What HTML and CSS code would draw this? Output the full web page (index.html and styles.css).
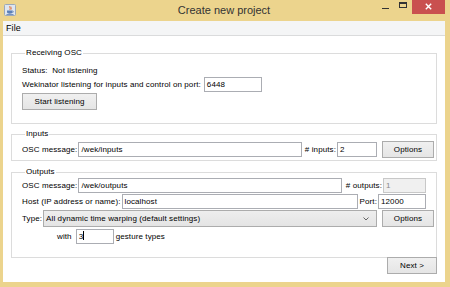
FILE: index.html
```html
<!DOCTYPE html>
<html>
<head>
<meta charset="utf-8">
<link rel="stylesheet" href="styles.css">
</head>
<body>
<div class="window">
  <div class="titlebar">
    <div class="tb-left">
      <svg class="appicon" width="12" height="12" viewBox="0 0 12 12">
        <rect x="0.5" y="0.5" width="11" height="11" rx="1" fill="#dfe6ef" stroke="#9aa8ba"/>
        <path d="M6 2 C5 3.5 7 4 5.8 5.8 M7.2 2.8 C6.6 4 7.8 4.3 7 5.6" stroke="#e0662a" stroke-width="0.9" fill="none"/>
        <path d="M3 6.5 H8.5 V8 C8.5 9.2 7.5 9.7 5.8 9.7 C4 9.7 3 9.2 3 8 Z" fill="#5b7fb8"/>
        <path d="M8.5 7 C9.8 7 9.8 8.5 8.4 8.6" stroke="#5b7fb8" stroke-width="0.7" fill="none"/>
        <rect x="2.5" y="10" width="7" height="0.8" fill="#5b7fb8"/>
      </svg>
    </div>
    <div class="title">Create new project</div>
    <div class="tb-right">
      <div class="ctl ctl-min"><span class="min-glyph"></span></div>
      <div class="ctl ctl-max"><span class="max-glyph"></span></div>
      <div class="ctl ctl-close">
        <svg width="7" height="7" viewBox="0 0 7 7"><path d="M0.8 0.8 L6.2 6.2 M6.2 0.8 L0.8 6.2" stroke="#fff" stroke-width="1.4"/></svg>
      </div>
    </div>
  </div>
  <div class="client">
    <div class="menubar"><span class="menu-item">File</span></div>
    <div class="content">
      <fieldset class="group group-receive">
        <legend>Receiving OSC</legend>
        <div class="line status">Status:&nbsp; Not listening</div>
        <div class="row row-port">
          <span class="label">Wekinator listening for inputs and control on port:</span>
          <span class="field field-port">6448</span>
        </div>
        <div class="row">
          <span class="btn btn-start">Start listening</span>
        </div>
      </fieldset>

      <fieldset class="group group-inputs">
        <legend>Inputs</legend>
        <div class="row row-inputs">
          <span class="label">OSC message:</span>
          <span class="field grow">/wek/inputs</span>
          <span class="label lbl-num">#&nbsp;inputs:</span>
          <span class="field field-num">2</span>
          <span class="btn btn-options">Options</span>
        </div>
      </fieldset>

      <fieldset class="group group-outputs">
        <legend>Outputs</legend>
        <div class="row row-o1">
          <span class="label">OSC message:</span>
          <span class="field grow">/wek/outputs</span>
          <span class="label lbl-outs">#&nbsp;outputs:</span>
          <span class="field field-disabled">1</span>
        </div>
        <div class="row row-o2">
          <span class="label">Host (IP address or name):</span>
          <span class="field grow">localhost</span>
          <span class="label lbl-port">Port:</span>
          <span class="field field-port2">12000</span>
        </div>
        <div class="row row-o3">
          <span class="label">Type:</span>
          <span class="combo grow">
            <span class="combo-text">All dynamic time warping (default settings)</span>
            <svg class="chev" width="6" height="4" viewBox="0 0 6 4"><path d="M0.5 0.5 L3 3 L5.5 0.5" stroke="#555" stroke-width="0.9" fill="none"/></svg>
          </span>
          <span class="btn btn-options">Options</span>
        </div>
        <div class="row row-o4">
          <span class="label">with</span>
          <span class="field field-gest">3<span class="caret"></span></span>
          <span class="label">gesture types</span>
        </div>
      </fieldset>

      <div class="footer">
        <span class="btn btn-next">Next &gt;</span>
      </div>
    </div>
  </div>
</div>
</body>
</html>
```

FILE: styles.css
```css
* { box-sizing: border-box; }
html, body { margin: 0; padding: 0; }
body {
  width: 450px;
  height: 287px;
  overflow: hidden;
  font-family: "Liberation Sans", Arial, sans-serif;
  font-size: 8px;
  letter-spacing: 0.1px;
  color: #000;
}
.window {
  width: 450px;
  height: 287px;
  background: #ecd48d;
  display: flex;
  flex-direction: column;
  padding: 0 5px 5px 3px;
}
.titlebar {
  height: 21px;
  display: grid;
  grid-template-columns: 1fr auto 1fr;
  align-items: start;
  flex: none;
}
.tb-left { padding: 4px 0 0 1px; height: 21px; }
.appicon { display: block; }
.title {
  font-size: 11px;
  letter-spacing: 0;
  color: #333;
  line-height: 20px;
}
.tb-right {
  display: flex;
  justify-content: flex-end;
  align-items: flex-start;
}
.ctl {
  height: 14px;
  display: flex;
  align-items: center;
  justify-content: center;
}
.ctl-min { width: 18px; }
.min-glyph { width: 7px; height: 1px; background: #333; margin-top: 3px; }
.ctl-max { width: 18px; }
.max-glyph { width: 8px; height: 6px; border: 1px solid #333; border-top-width: 2px; margin-top: -5px; }
.ctl-close {
  width: 33px;
  background: #c9504f;
}
.ctl-close svg { display: block; margin-top: -1px; }

.client {
  flex: 1;
  background: #fff;
  display: flex;
  flex-direction: column;
}
.menubar {
  height: 15px;
  background: #f4f5f6;
  border-bottom: 1px solid #dadbdc;
  padding-left: 2px;
  flex: none;
}
.menu-item {
  font-size: 9px;
  line-height: 14px;
  padding: 0 1px;
}
.content {
  flex: 1;
  padding: 12px 8px 0 8px;
  display: flex;
  flex-direction: column;
}
.group {
  margin: 0;
  padding: 0 2px 0 10px;
  border: 1px solid #dcdcdc;
  min-width: 0;
}
.group legend {
  font-size: 8px;
  line-height: 10px;
  padding: 0 1px;
  margin-left: 3px;
}
.group-receive { padding-top: 7px; padding-bottom: 13px; margin-bottom: 5px; }
.group-inputs { padding-top: 2px; padding-bottom: 2px; margin-bottom: 6px; }
.group-outputs { padding-top: 1px; padding-bottom: 13px; }

.line { line-height: 12px; height: 12px; }
.row {
  display: flex;
  align-items: center;
  white-space: nowrap;
}
.label { line-height: 12px; }
.field {
  height: 15px;
  border: 1px solid #abadb3;
  background: #fff;
  padding: 0 2px;
  line-height: 13px;
  display: inline-block;
  overflow: hidden;
}
.grow { flex: 1; min-width: 0; }

.row-port .label { margin-right: 3px; }
.field-port { width: 58px; }

.btn {
  display: inline-flex;
  align-items: center;
  justify-content: center;
  height: 17px;
  border: 1px solid #acacac;
  background: linear-gradient(#f0f0f0, #e5e5e5);
  line-height: 15px;
}
.btn-start { width: 75px; margin-top: 1px; }
.btn-options { width: 52px; margin-left: 5px; }

.row-inputs .label:first-child { margin-right: 1px; }
.lbl-num { margin: 0 1px 0 3px; }
.field-num { width: 40px; }

.row-o1 { margin-right: 8px; }
.row-o1 .label:first-child { margin-right: 1px; }
.lbl-outs { margin: 0 1px 0 4px; }
.field-disabled {
  width: 43px;
  background: #f0f0f0;
  border-color: #c8c8c8;
  color: #8a8a8a;
}
.row-o2 { margin-right: 8px; margin-top: 1px; }
.row-o2 .label:first-child { margin-right: 1px; }
.lbl-port { margin: 0 1px 0 2px; }
.field-port2 { width: 48px; }
.row-o3 { margin-top: 1px; }
.row-o3 .label { margin-right: 1px; }
.combo {
  height: 17px;
  border: 1px solid #acacac;
  background: linear-gradient(#eeeeee, #e4e4e4);
  display: flex;
  align-items: center;
  padding: 0 7px 0 2px;
}
.combo-text { flex: 1; line-height: 15px; }
.chev { display: block; }
.row-o4 { margin-top: 2px; padding-left: 35px; }
.row-o4 .label:first-child { margin-right: 4px; }
.field-gest { width: 38px; margin-right: 2px; }
.caret {
  display: inline-block;
  width: 1px;
  height: 9px;
  background: #000;
  vertical-align: -1px;
}

.footer {
  display: flex;
  justify-content: flex-end;
  margin-top: -1px;
}
.btn-next { width: 50px; }
```
